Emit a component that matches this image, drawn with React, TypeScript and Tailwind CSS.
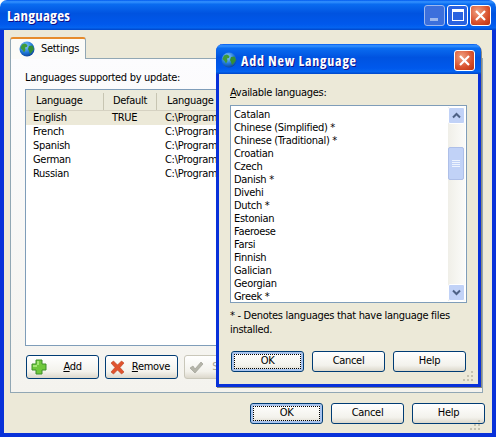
import React from 'react';

const titleBg =
  'bg-[linear-gradient(180deg,#0058ee_0%,#3593ff_6%,#0a6cf0_14%,#0053e0_45%,#0058ec_80%,#0463f0_92%,#0046c8_100%)]';
const uiFont = "font-['DejaVu_Sans',sans-serif] [font-stretch:condensed] tracking-[-0.3px]";

const languages = [
  'Catalan',
  'Chinese (Simplified) *',
  'Chinese (Traditional) *',
  'Croatian',
  'Czech',
  'Danish *',
  'Divehi',
  'Dutch *',
  'Estonian',
  'Faeroese',
  'Farsi',
  'Finnish',
  'Galician',
  'Georgian',
  'Greek *',
];

const rows = [
  { name: 'English', def: 'TRUE', path: 'C:\\Program Files' },
  { name: 'French', def: '', path: 'C:\\Program Files' },
  { name: 'Spanish', def: '', path: 'C:\\Program Files' },
  { name: 'German', def: '', path: 'C:\\Program Files' },
  { name: 'Russian', def: '', path: 'C:\\Program Files' },
];

const Globe = ({ id }: { id: string }) => (
  <svg width="16" height="16" viewBox="0 0 16 16" className="shrink-0">
    <defs>
      <radialGradient id={id} cx="40%" cy="30%" r="75%">
        <stop offset="0%" stopColor="#8fd0ff" />
        <stop offset="60%" stopColor="#1f77d8" />
        <stop offset="100%" stopColor="#0b3f94" />
      </radialGradient>
    </defs>
    <circle cx="8" cy="8" r="7.5" fill={`url(#${id})`} />
    <path d="M3 3.5 6 2.5 8.5 4 8 6 6 6.5 6.5 9 5 11.5 3.5 9 1.5 7Z" fill="#3f9a3a" />
    <path d="M10 5 13.5 4.5 15 8 13 11 11 13 10 10 9 8Z" fill="#358f35" />
  </svg>
);

const Grip = () => (
  <svg width="12" height="12" viewBox="0 0 12 12" className="absolute right-[4px] bottom-[2px]">
    {[
      [9, 1],
      [5, 5],
      [9, 5],
      [1, 9],
      [5, 9],
      [9, 9],
    ].map(([x, y]) => (
      <rect key={`${x}-${y}`} x={x} y={y} width="2" height="2" fill="#c5c2b0" />
    ))}
  </svg>
);

const CloseButton = () => (
  <div className="flex h-[21px] w-[21px] items-center justify-center rounded-[3px] border border-white bg-[radial-gradient(circle_at_35%_30%,#f0a080,#d8502c_60%,#b83010)]">
    <svg width="13" height="13" viewBox="0 0 13 13">
      <path d="M2 2 11 11M11 2 2 11" stroke="#fff" strokeWidth="2.2" />
    </svg>
  </div>
);

const PushButton = ({
  label,
  focused,
  className,
}: {
  label: string;
  focused?: boolean;
  className: string;
}) => (
  <button
    className={`flex h-[21px] items-center justify-center rounded-[3px] border border-[#003c74] bg-[linear-gradient(180deg,#ffffff,#f3f2ec_70%,#dcd8cc)] text-[11px] text-black ${
      focused ? 'shadow-[inset_0_0_0_2px_#a9c4ee]' : ''
    } ${className}`}
  >
    {focused ? (
      <span className="flex h-full w-full items-center justify-center p-[2px]">
        <span className="flex h-full w-full items-center justify-center border border-dotted border-black">
          {label}
        </span>
      </span>
    ) : (
      label
    )}
  </button>
);

const IconButton = ({
  icon,
  children,
  disabled,
  className,
}: {
  icon: React.ReactNode;
  children: React.ReactNode;
  disabled?: boolean;
  className: string;
}) => (
  <button
    className={`flex h-[24px] items-center rounded-[3px] border bg-[linear-gradient(180deg,#ffffff,#f3f2ec_70%,#dcd8cc)] pl-[4px] text-[11px] ${
      disabled ? 'border-[#c9c7ba] text-[#a3a291]' : 'border-[#003c74] text-black'
    } ${className}`}
  >
    {icon}
    <span className="flex-1 text-center">{children}</span>
  </button>
);

const ScrollButton = ({ down }: { down?: boolean }) => (
  <div className="flex h-[17px] w-[17px] items-center justify-center rounded-[2px] border border-white bg-[#c1d2f7]">
    <svg width="9" height="7" viewBox="0 0 9 7">
      <path d={down ? 'M1 1.5 4.5 5 8 1.5' : 'M1 5.5 4.5 2 8 5.5'} fill="none" stroke="#4d6185" strokeWidth="2" />
    </svg>
  </div>
);

const AddDialog = () => (
  <div className="absolute top-[44px] left-[216px] flex h-[343px] w-[265px] flex-col rounded-t-[7px] border-x-[3px] border-b-[3px] border-[#0831d9] bg-[#ece9d8] shadow-[1px_1px_0_#8a8a80]">
    <div className={`-mx-[3px] flex h-[30px] items-center rounded-t-[7px] pt-[2px] pr-[6px] pl-[5px] ${titleBg}`}>
      <Globe id="globe-dialog" />
      <span className="ml-[4px] flex-1 font-['Open_Sans',sans-serif] text-[14px] font-bold tracking-[0.8px] text-white [text-shadow:1px_1px_#0f1089]">
        Add New Language
      </span>
      <CloseButton />
    </div>
    <div className="relative flex flex-1 flex-col px-[11px]">
      <p className="mt-[12px] h-[14px] text-[11px] leading-[14px] text-black">
        <span className="underline">A</span>vailable languages:
      </p>
      <div className="mt-[5px] flex h-[198px] border border-[#7f9db9] bg-white p-px">
        <ul className="flex-1 pt-[1px] pl-[2px] text-[11px] leading-[13px] text-black">
          {languages.map((l) => (
            <li key={l} className="h-[13px] whitespace-nowrap">
              {l}
            </li>
          ))}
        </ul>
        <div className="flex w-[17px] flex-col bg-[linear-gradient(90deg,#f0efe8,#fbfbf9)]">
          <ScrollButton />
          <div className="mt-[23px] flex h-[33px] w-[16px] flex-col items-center justify-center gap-px rounded-[2px] border border-[#aebfe8] bg-[#c1d2f7]">
            <i className="block h-px w-[8px] bg-[#eef4fe]" />
            <i className="block h-px w-[8px] bg-[#eef4fe]" />
            <i className="block h-px w-[8px] bg-[#eef4fe]" />
            <i className="block h-px w-[8px] bg-[#eef4fe]" />
          </div>
          <div className="flex-1" />
          <ScrollButton down />
        </div>
      </div>
      <p className="mt-[6px] h-[28px] text-[11px] leading-[14px] text-black">
        * - Denotes languages that have language files installed.
      </p>
      <div className="mt-[14px] ml-px flex gap-[8px]">
        <PushButton label="OK" focused className="w-[73px]" />
        <PushButton label="Cancel" className="w-[73px]" />
        <PushButton label="Help" className="w-[73px]" />
      </div>
      <Grip />
    </div>
  </div>
);

const App: React.FC = () => {
  return (
    <div className={`relative flex h-[437px] w-[496px] flex-col overflow-hidden ${uiFont}`}>
      <div className={`flex h-[30px] shrink-0 items-center rounded-t-[7px] pr-[5px] pl-[7px] ${titleBg}`}>
        <span className="flex-1 font-['Open_Sans',sans-serif] text-[15px] font-bold tracking-[0.2px] text-white [text-shadow:1px_1px_#0f1089]">
          Languages
        </span>
        <div className="flex gap-[2px]">
          <div className="flex h-[21px] w-[21px] items-end justify-start rounded-[3px] border border-[#9db8ee] bg-[#3c6fdc] pb-[4px] pl-[5px]">
            <i className="block h-[3px] w-[8px] bg-[#9db8ee]" />
          </div>
          <div className="flex h-[21px] w-[21px] items-center justify-center rounded-[3px] border border-white bg-[#2a62e0]">
            <i className="block h-[12px] w-[12px] border border-t-[3px] border-white" />
          </div>
          <CloseButton />
        </div>
      </div>

      <div className="flex flex-1 flex-col border-x-[4px] border-b-[4px] border-[#0831d9] bg-[#ece9d8] pt-[7px] pr-[9px] pl-[6px]">
        <div className="relative z-10 -mb-px flex h-[22px] w-[76px] items-center gap-[6px] rounded-t-[3px] border-x border-[#91a7b4] border-t-[2px] border-t-[#e68b2c] bg-[#fbfbf8] pl-[8px] text-[11px] text-black">
          <Globe id="globe-tab" />
          Settings
        </div>
        <div className="flex h-[335px] flex-col border border-[#91a7b4] bg-[linear-gradient(180deg,#fcfcfe,#f4f3ee)] pt-[12px] pr-[10px] pl-[14px]">
          <p className="h-[14px] text-[11px] leading-[14px] text-black">Languages supported by update:</p>
          <div className="mt-[4px] flex h-[257px] flex-col overflow-hidden border border-[#7f9db9] bg-white">
            <div className="flex h-[21px] shrink-0 items-center border-b border-[#d6d2c2] bg-[#ebeadb] pt-[3px] text-[11px] text-black">
              <span className="w-[78px] border-r border-[#c7c5b2] pl-[10px]">Language</span>
              <span className="w-[53px] border-r border-[#c7c5b2] pl-[9px]">Default</span>
              <span className="pl-[10px]">Language File</span>
            </div>
            {rows.map((r, i) => (
              <div
                key={r.name}
                className={`flex h-[14px] items-center text-[11px] leading-[14px] text-black ${
                  i === 0 ? 'bg-[#ece9d8]' : ''
                }`}
              >
                <span className="w-[79px] pl-[7px]">{r.name}</span>
                <span className="w-[53px] pl-[7px]">{r.def}</span>
                <span className="whitespace-nowrap pl-[7px]">{r.path}</span>
              </div>
            ))}
          </div>
          <div className="mt-[9px] flex gap-[6px] pl-px">
            <IconButton
              className="w-[73px]"
              icon={
                <svg width="16" height="16" viewBox="0 0 16 16">
                  <path d="M5 1H11V5H15V11H11V15H5V11H1V5H5Z" fill="#6fc83c" stroke="#3f8f2a" />
                  <path d="M6 6V2H8V6H2V8H6Z" fill="#a4e676" />
                </svg>
              }
            >
              <span className="underline">A</span>dd
            </IconButton>
            <IconButton
              className="w-[73px]"
              icon={
                <svg width="15" height="15" viewBox="0 0 15 15">
                  <path d="M1 3 3.5 1 7.5 5 11.5 1 14 3 10 7.5 14 12 11.5 14 7.5 10 3.5 14 1 12 5 7.5Z" fill="#e0532e" stroke="#b8401f" strokeWidth="0.6" />
                </svg>
              }
            >
              <span className="underline">R</span>emove
            </IconButton>
            <IconButton
              disabled
              className="w-[90px]"
              icon={
                <svg width="15" height="15" viewBox="0 0 15 15">
                  <path d="M1 8 4 6 6 9 12 2 14 4 6 13Z" fill="#b5b5aa" stroke="#99998e" strokeWidth="0.6" />
                </svg>
              }
            >
              Set Default
            </IconButton>
          </div>
        </div>
        <div className="relative -mr-[2px] flex flex-1 justify-end pt-[10px]">
          <div className="flex gap-[8px]">
            <PushButton label="OK" focused className="w-[73px]" />
            <PushButton label="Cancel" className="w-[73px]" />
            <PushButton label="Help" className="w-[73px]" />
          </div>
          <Grip />
        </div>
      </div>

      <AddDialog />
    </div>
  );
};

export default App;
